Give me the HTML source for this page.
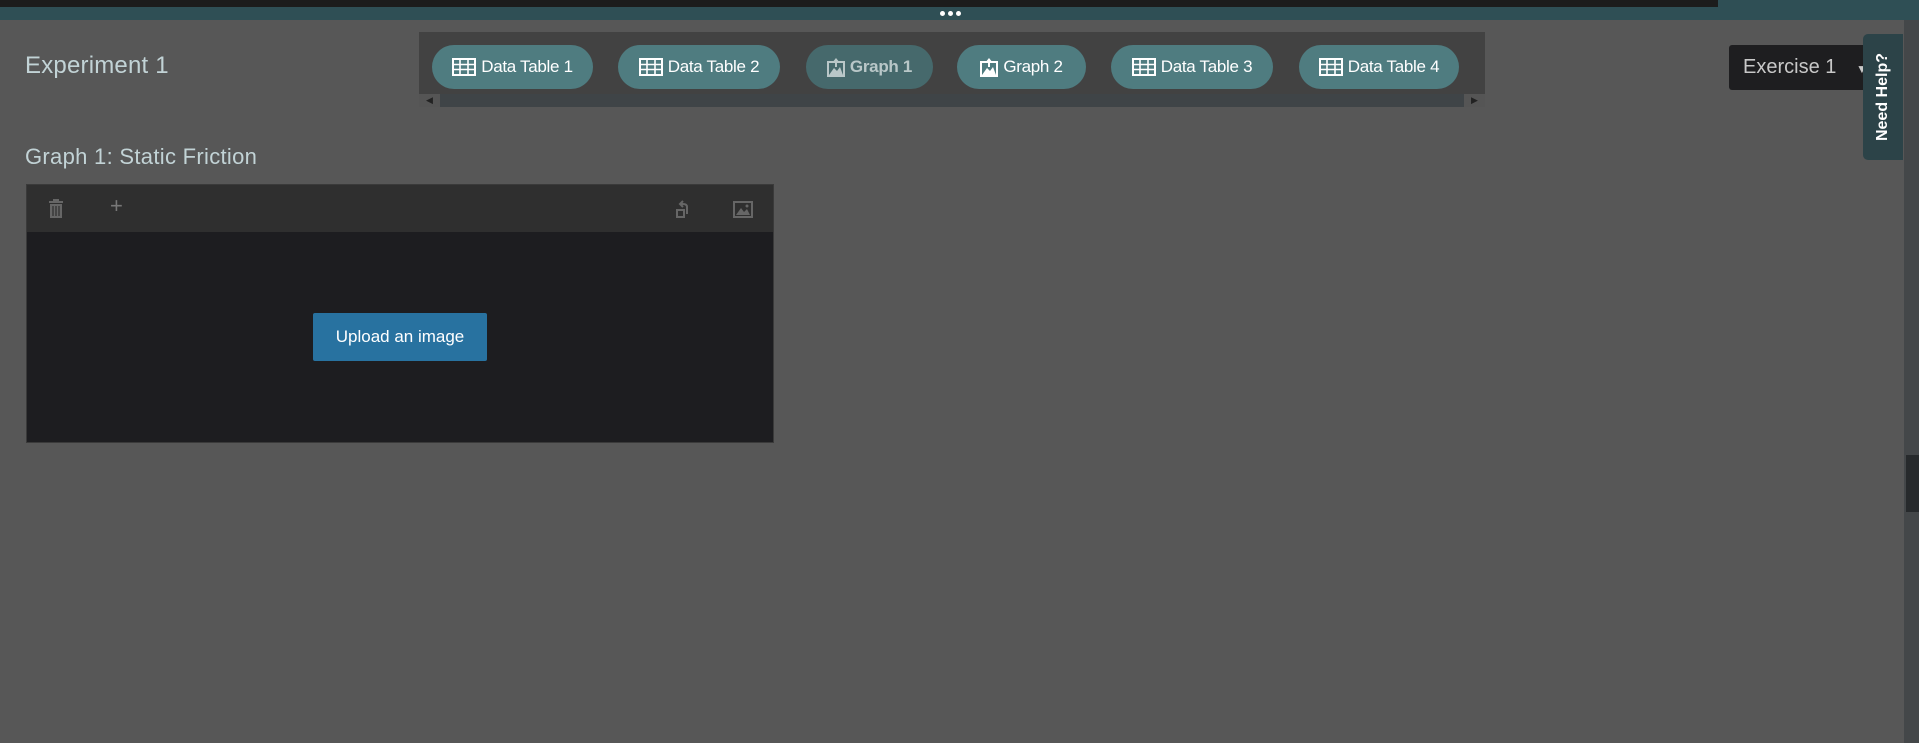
<!DOCTYPE html>
<html><head><meta charset="utf-8"><style>
*{margin:0;padding:0;box-sizing:border-box}
body{width:1919px;height:743px;background:#575757;position:relative;overflow:hidden;font-family:"Liberation Sans",sans-serif}
.a{position:absolute}
.pill{position:absolute;top:45px;height:44px;border-radius:22px;background:#4f7c80;color:#fff;font-size:17px;display:flex;align-items:center;justify-content:center;gap:5px;letter-spacing:-0.3px}
.pill svg{display:block}
</style></head><body>
<div class="a" style="left:0;top:0;width:1919px;height:20px;background:#2f4f55"></div>
<div class="a" style="left:0;top:0;width:1718px;height:7px;background:#1c1c1c"></div>
<div class="a" style="left:940px;top:11px;width:22px;height:5px;display:flex;gap:3px"><i style="width:5px;height:5px;border-radius:50%;background:#fff"></i><i style="width:5px;height:5px;border-radius:50%;background:#fff"></i><i style="width:5px;height:5px;border-radius:50%;background:#fff"></i></div>

<div class="a" style="left:25px;top:52px;color:#c2d3d6;font-size:24px;letter-spacing:0.2px">Experiment 1</div>

<div class="a" style="left:419px;top:32px;width:1066px;height:75px;background:#424242"></div>
<div class="a" style="left:419px;top:94px;width:1066px;height:13px;background:#3f4447"></div>
<div class="a" style="left:419px;top:94px;width:21px;height:13px;background:#555;color:#222;font-size:9px;line-height:13px;text-align:center">◀</div>
<div class="a" style="left:1464px;top:94px;width:21px;height:13px;background:#555;color:#222;font-size:9px;line-height:13px;text-align:center">▶</div>

<svg width="0" height="0" style="position:absolute"><defs>
<symbol id="tb" viewBox="0 0 24 18"><rect x="1" y="1" width="22" height="16" fill="none" stroke="currentColor" stroke-width="2"/><path d="M1 6.5H23M1 11.5H23M8 1V17M16 1V17" stroke="currentColor" stroke-width="1.6"/></symbol>
<symbol id="gr" viewBox="0 0 18 20"><rect x="1" y="5" width="16" height="14" fill="none" stroke="currentColor" stroke-width="2"/><path d="M2 18L7 11L10 14L13 10L16 18Z" fill="currentColor"/><path d="M9 1L5 6H8V10H10V6H13Z" fill="currentColor"/></symbol>
</defs></svg>

<div class="pill" style="left:432px;width:161px"><svg width="24" height="18" style="color:#fff"><use href="#tb"/></svg>Data Table 1</div>
<div class="pill" style="left:618px;width:162px"><svg width="24" height="18" style="color:#fff"><use href="#tb"/></svg>Data Table 2</div>
<div class="pill" style="left:806px;width:127px;background:#46696c;color:#b9c7c8;font-weight:bold"><svg width="18" height="20" style="color:#b9c7c8"><use href="#gr"/></svg>Graph 1</div>
<div class="pill" style="left:957px;width:129px"><svg width="18" height="20" style="color:#fff"><use href="#gr"/></svg>Graph 2</div>
<div class="pill" style="left:1111px;width:162px"><svg width="24" height="18" style="color:#fff"><use href="#tb"/></svg>Data Table 3</div>
<div class="pill" style="left:1299px;width:160px"><svg width="24" height="18" style="color:#fff"><use href="#tb"/></svg>Data Table 4</div>

<div class="a" style="left:1729px;top:45px;width:150px;height:45px;background:#1e1e20;border-radius:3px;color:#c8c8c8;font-size:20px;line-height:45px;padding-left:14px">Exercise 1 <span style="font-size:12px;margin-left:14px">▼</span></div>
<div class="a" style="left:1863px;top:34px;width:40px;height:126px;background:#2c4348;border-radius:5px 0 0 5px"></div>
<div class="a" style="left:1833px;top:87px;width:100px;height:20px;transform:rotate(-90deg);color:#fff;font-weight:bold;font-size:16px;text-align:center;line-height:20px">Need Help?</div>
<div class="a" style="left:1904px;top:0;width:15px;height:743px;background:#444749"></div>
<div class="a" style="left:1904px;top:0;width:15px;height:20px;background:#2f4f55"></div>
<div class="a" style="left:1906px;top:455px;width:13px;height:57px;background:#272a2c"></div>

<div class="a" style="left:25px;top:144px;color:#c2d3d6;font-size:22px;letter-spacing:0.3px">Graph 1: Static Friction</div>

<div class="a" style="left:26px;top:184px;width:748px;height:259px;background:#1d1d20;border:1px solid #3a3a3a"></div>
<div class="a" style="left:27px;top:185px;width:746px;height:47px;background:#2f2f2f"></div>
<svg class="a" style="left:48px;top:199px" width="16" height="20" viewBox="0 0 16 20" fill="#666"><rect x="1" y="2" width="14" height="2"/><rect x="5" y="0" width="6" height="2"/><path d="M2 5H14V19H2Z"/><path d="M5 7V17M8 7V17M11 7V17" stroke="#2f2f2f" stroke-width="1.2"/></svg>
<div class="a" style="left:110px;top:193px;color:#777;font-size:22px">+</div>
<svg class="a" style="left:675px;top:199px" width="18" height="20" viewBox="0 0 18 20" fill="none" stroke="#666" stroke-width="2"><rect x="2" y="11" width="7" height="7"/><path d="M12 15V8Q12 5 8 5H5M8 2L5 5L8 8"/></svg>
<svg class="a" style="left:733px;top:201px" width="20" height="17" viewBox="0 0 20 17"><rect x="1" y="1" width="18" height="15" fill="none" stroke="#666" stroke-width="2"/><path d="M3 14L8 7L11 11L14 8L17 14Z" fill="#666"/><circle cx="14" cy="5" r="1.5" fill="#666"/></svg>

<div class="a" style="left:313px;top:313px;width:174px;height:48px;background:#2872a0;border-radius:2px;color:#fff;font-size:17px;line-height:48px;text-align:center">Upload an image</div>
</body></html>
